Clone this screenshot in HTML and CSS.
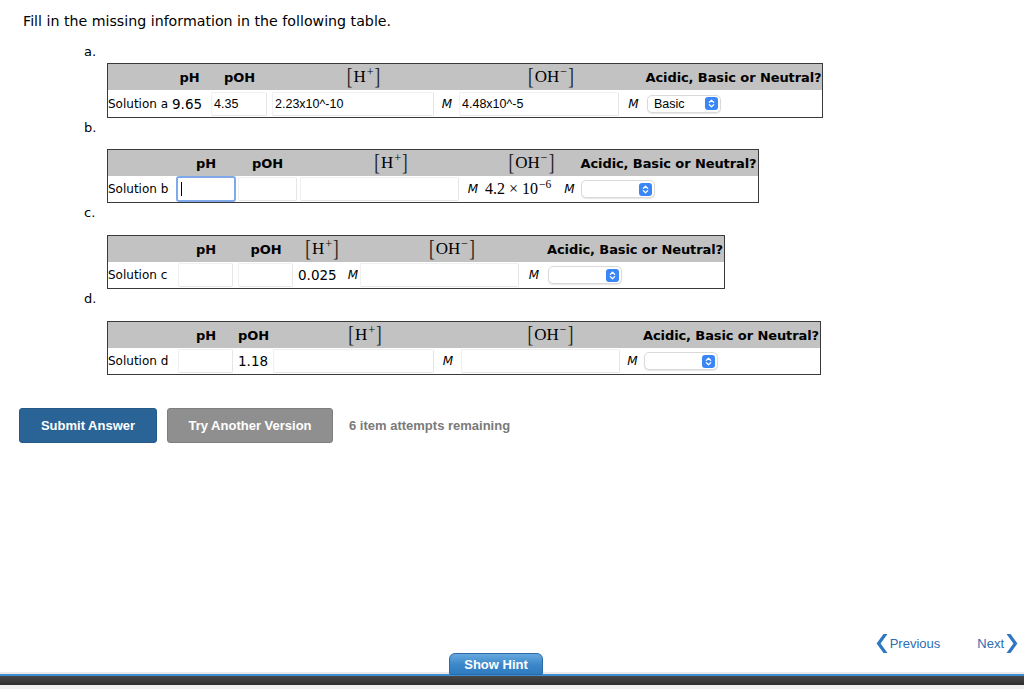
FILE: index.html
```html
<!DOCTYPE html>
<html lang="en">
<head>
<meta charset="utf-8">
<title>pH table</title>
<link rel="stylesheet" href="styles.css">
</head>
<body>
<main class="page">
  <p class="title">Fill in the missing information in the following table.</p>

  <section class="part">
    <div class="part-label first">a.</div>
    <div class="grid grid-a">
      <div class="th"></div>
      <div class="th">pH</div>
      <div class="th">pOH</div>
      <div class="th span2"><span class="math"><span class="br">[</span>H<sup>+</sup><span class="br">]</span></span></div>
      <div class="th span2"><span class="math"><span class="br">[</span>OH<sup>&minus;</sup><span class="br">]</span></span></div>
      <div class="th">Acidic, Basic or Neutral?</div>

      <div class="td label">Solution a</div>
      <div class="td value">9.65</div>
      <div class="td field"><input class="inp" value="4.35"></div>
      <div class="td field"><input class="inp" value="2.23x10^-10"></div>
      <div class="td unit">M</div>
      <div class="td field"><input class="inp" value="4.48x10^-5"></div>
      <div class="td unit">M</div>
      <div class="td choice"><div class="sel"><span>Basic</span><svg class="sel-icon" viewBox="0 0 13 13" width="13" height="13"><rect x="0" y="0" width="13" height="13" rx="3" fill="#3a86f4"/><path d="M4.3 5.4 L6.5 3.3 L8.7 5.4 M4.3 7.6 L6.5 9.7 L8.7 7.6" stroke="#fff" stroke-width="1.3" fill="none" stroke-linecap="round" stroke-linejoin="round"/></svg></div></div>
    </div>
  </section>

  <section class="part">
    <div class="part-label">b.</div>
    <div class="grid grid-b">
      <div class="th"></div>
      <div class="th">pH</div>
      <div class="th">pOH</div>
      <div class="th span2"><span class="math"><span class="br">[</span>H<sup>+</sup><span class="br">]</span></span></div>
      <div class="th span2"><span class="math"><span class="br">[</span>OH<sup>&minus;</sup><span class="br">]</span></span></div>
      <div class="th">Acidic, Basic or Neutral?</div>

      <div class="td label">Solution b</div>
      <div class="td field tight"><div class="inp focus"><span class="caret"></span></div></div>
      <div class="td field tight"><input class="inp" value=""></div>
      <div class="td field"><input class="inp" value=""></div>
      <div class="td unit">M</div>
      <div class="td sci"><span class="math">4.2<span class="times">&times;</span>10<sup>&minus;6</sup></span></div>
      <div class="td unit">M</div>
      <div class="td choice"><div class="sel"><span></span><svg class="sel-icon" viewBox="0 0 13 13" width="13" height="13"><rect x="0" y="0" width="13" height="13" rx="3" fill="#3a86f4"/><path d="M4.3 5.4 L6.5 3.3 L8.7 5.4 M4.3 7.6 L6.5 9.7 L8.7 7.6" stroke="#fff" stroke-width="1.3" fill="none" stroke-linecap="round" stroke-linejoin="round"/></svg></div></div>
    </div>
  </section>

  <section class="part">
    <div class="part-label">c.</div>
    <div class="grid grid-c">
      <div class="th"></div>
      <div class="th">pH</div>
      <div class="th">pOH</div>
      <div class="th shift"><span class="math"><span class="br">[</span>H<sup>+</sup><span class="br">]</span></span></div>
      <div class="th span2"><span class="math"><span class="br">[</span>OH<sup>&minus;</sup><span class="br">]</span></span></div>
      <div class="th">Acidic, Basic or Neutral?</div>

      <div class="td label">Solution c</div>
      <div class="td field"><input class="inp" value=""></div>
      <div class="td field"><input class="inp" value=""></div>
      <div class="td value">0.025<span class="unit-inline">M</span></div>
      <div class="td field"><input class="inp" value=""></div>
      <div class="td unit">M</div>
      <div class="td choice"><div class="sel"><span></span><svg class="sel-icon" viewBox="0 0 13 13" width="13" height="13"><rect x="0" y="0" width="13" height="13" rx="3" fill="#3a86f4"/><path d="M4.3 5.4 L6.5 3.3 L8.7 5.4 M4.3 7.6 L6.5 9.7 L8.7 7.6" stroke="#fff" stroke-width="1.3" fill="none" stroke-linecap="round" stroke-linejoin="round"/></svg></div></div>
    </div>
  </section>

  <section class="part">
    <div class="part-label">d.</div>
    <div class="grid grid-d">
      <div class="th"></div>
      <div class="th">pH</div>
      <div class="th">pOH</div>
      <div class="th span2"><span class="math"><span class="br">[</span>H<sup>+</sup><span class="br">]</span></span></div>
      <div class="th span2"><span class="math"><span class="br">[</span>OH<sup>&minus;</sup><span class="br">]</span></span></div>
      <div class="th">Acidic, Basic or Neutral?</div>

      <div class="td label">Solution d</div>
      <div class="td field"><input class="inp" value=""></div>
      <div class="td value">1.18</div>
      <div class="td field"><input class="inp" value=""></div>
      <div class="td unit">M</div>
      <div class="td field"><input class="inp" value=""></div>
      <div class="td unit">M</div>
      <div class="td choice"><div class="sel"><span></span><svg class="sel-icon" viewBox="0 0 13 13" width="13" height="13"><rect x="0" y="0" width="13" height="13" rx="3" fill="#3a86f4"/><path d="M4.3 5.4 L6.5 3.3 L8.7 5.4 M4.3 7.6 L6.5 9.7 L8.7 7.6" stroke="#fff" stroke-width="1.3" fill="none" stroke-linecap="round" stroke-linejoin="round"/></svg></div></div>
    </div>
  </section>

  <div class="actions">
    <button class="btn btn-primary" type="button">Submit Answer</button>
    <button class="btn btn-gray" type="button">Try Another Version</button>
    <span class="attempts">6 item attempts remaining</span>
  </div>
</main>

<footer class="footer">
  <nav class="pager">
    <a class="pager-link prev" href="#"><svg class="chev" viewBox="0 0 12 19" width="12" height="19"><polygon points="7.5,0 11.5,0 4.6,9.5 11.5,19 7.5,19 0.6,9.5" fill="#2f77c0"/></svg>Previous</a>
    <a class="pager-link next" href="#">Next<svg class="chev" viewBox="0 0 12 19" width="12" height="19"><polygon points="0.5,0 4.5,0 11.4,9.5 4.5,19 0.5,19 7.4,9.5" fill="#2f77c0"/></svg></a>
  </nav>
  <div class="hint-row">
    <button class="hint" type="button">Show Hint</button>
  </div>
  <div class="bar">
    <div class="bar-light"></div>
    <div class="bar-blue"></div>
    <div class="bar-dark"></div>
    <div class="bar-base"></div>
  </div>
</footer>
</body>
</html>
```

FILE: styles.css
```css
html, body {
  margin: 0;
  padding: 0;
}

body {
  width: 1024px;
  height: 689px;
  overflow: hidden;
  background: #ffffff;
  color: #000;
  font-family: "DejaVu Sans", Verdana, sans-serif;
  display: flex;
  flex-direction: column;
}

.page {
  padding: 11px 0 0 19px;
}

.title {
  margin: 0 0 0 4px;
  font-size: 14.2px;
  line-height: 20px;
}

.part-label {
  margin-left: 65px;
  font-size: 13px;
  line-height: 20px;
  height: 20px;
}

.part-label.first {
  margin-top: 11px;
}

.grid {
  display: grid;
  width: max-content;
  margin-left: 88px;
  margin-top: 12px;
  border: 1px solid #3a3a3a;
}

.part-label.first + .grid {
  margin-top: 1px;
}

.grid-a { grid-template-columns: 62px 39px 61px 167px 20px 165px 23px 177px; }
.grid-b { grid-template-columns: 67px 62px 61px 164px 22px 76px 19px 179px; margin-top: 11px; }
.grid-c { grid-template-columns: 68px 60px 60px 62px 164px 24px 178px; }
.grid-d { grid-template-columns: 68px 60px 35px 166px 22px 164px 19px 178px; }

.th {
  height: 26px;
  background: #c2c2c2;
  display: flex;
  align-items: center;
  justify-content: center;
  font-weight: bold;
  font-size: 13px;
  white-space: nowrap;
  letter-spacing: -0.1px;
}

.th.span2 {
  grid-column: span 2;
}

.th.shift {
  padding-right: 10px;
}

.td {
  height: 26px;
  display: flex;
  align-items: center;
  background: #fff;
  white-space: nowrap;
}

.grid-a .td {
  height: 27px;
}

.td.label {
  font-size: 12px;
}

.td.value {
  font-size: 13.5px;
  padding-left: 2px;
}

.td.field {
  padding: 0 3px 0 2px;
}

.td.field.tight {
  padding: 0 1px 0 1px;
}

.td.unit {
  justify-content: center;
  font-style: italic;
  font-size: 12px;
}

.unit-inline {
  font-style: italic;
  font-size: 12px;
  margin-left: 11px;
}

.td.choice {
  padding-left: 2px;
}

.inp {
  box-sizing: border-box;
  width: 100%;
  height: 24px;
  margin: 0;
  padding: 0 2px;
  border: 1px solid #e6e6e6;
  border-top-color: #f0f0f0;
  border-left-color: #f0f0f0;
  border-radius: 2px;
  background: #fff;
  font-family: "Liberation Sans", Arial, sans-serif;
  font-size: 12.5px;
  color: #000;
  outline: none;
}

.inp.focus {
  height: 26px;
  border: 2px solid #7fa9ea;
  border-radius: 3px;
  display: flex;
  align-items: center;
  padding-left: 3px;
}

.caret {
  display: inline-block;
  width: 1px;
  height: 14px;
  background: #000;
}

.math {
  font-family: "Liberation Serif", "DejaVu Serif", serif;
  font-weight: normal;
  font-size: 17px;
  letter-spacing: 0;
}

.br {
  display: inline-block;
  transform: scaleY(1.3);
  margin: 0 1px;
  color: #222;
}

.math sup {
  font-size: 0.72em;
  vertical-align: 0.5em;
  line-height: 0;
  margin-left: 1px;
}

.td.sci {
  padding-left: 1px;
}

.td.sci .math {
  font-size: 16px;
}

.times {
  margin: 0 4px;
}

.sel {
  box-sizing: border-box;
  width: 74px;
  height: 18px;
  border: 1px solid #dadada;
  border-radius: 5px;
  background: #fff;
  box-shadow: 0 1px 1px rgba(0, 0, 0, 0.1);
  display: flex;
  align-items: center;
  justify-content: space-between;
  padding: 0 2px 0 6px;
  font-family: "Liberation Sans", Arial, sans-serif;
  font-size: 12.5px;
}

.sel-icon {
  display: block;
}

.actions {
  display: flex;
  align-items: center;
  margin-top: 33px;
}

.btn {
  height: 35px;
  border-radius: 3px;
  font-family: "Liberation Sans", Arial, sans-serif;
  font-weight: bold;
  font-size: 13px;
  color: #fff;
  cursor: pointer;
  margin: 0;
}

.btn-primary {
  width: 138px;
  background: #2a6496;
  border: 1px solid #265a88;
}

.btn-gray {
  width: 166px;
  margin-left: 10px;
  background: #8f8f8f;
  border: 1px solid #7e7e7e;
}

.attempts {
  margin-left: 16px;
  font-family: "Liberation Sans", Arial, sans-serif;
  font-weight: bold;
  font-size: 13px;
  color: #7a7a7a;
}

.footer {
  margin-top: auto;
}

.pager {
  display: flex;
  justify-content: flex-end;
  align-items: center;
  gap: 37px;
  padding-right: 6px;
  height: 19px;
}

.pager-link {
  display: flex;
  align-items: center;
  gap: 2px;
  font-family: "Liberation Sans", Arial, sans-serif;
  font-size: 13px;
  color: #2c6db4;
  text-decoration: none;
}

.chev {
  display: block;
}

.hint-row {
  height: 19px;
  padding-left: 449px;
  position: relative;
  z-index: 2;
}

.hint {
  width: 94px;
  height: 22px;
  border: 1px solid #2b6aa5;
  border-radius: 6px 6px 2px 2px;
  background: linear-gradient(#66a9df, #3a86c8 55%, #2f7bc0);
  color: #fff;
  font-family: "Liberation Sans", Arial, sans-serif;
  font-weight: bold;
  font-size: 13px;
  padding: 0;
  margin: 0;
  display: block;
}

.bar-light {
  height: 2px;
  background: #e9e9e9;
}

.bar-blue {
  height: 2px;
  background: #3b8fd2;
}

.bar-dark {
  height: 9px;
  background: linear-gradient(#474747, #2e2e2e);
}

.bar-base {
  height: 4px;
  background: #eeeeee;
}
```
